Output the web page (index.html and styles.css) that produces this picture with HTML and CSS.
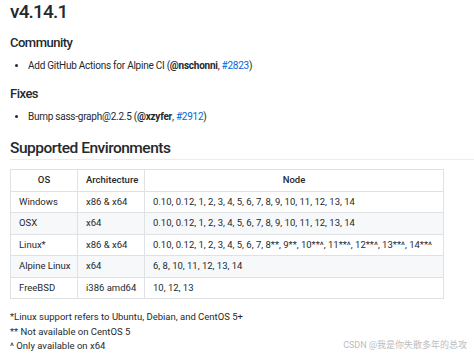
FILE: index.html
```html
<!DOCTYPE html>
<html lang="en">
<head>
    <meta charset="UTF-8">
    <title>v4.14.1</title>
    <link rel="stylesheet" href="styles.css">
</head>
<body>
    <div class="release">
        <h1>v4.14.1</h1>

        <h3>Community</h3>
        <ul>
            <li>Add GitHub Actions for Alpine CI (<strong>@nschonni</strong>, <a href="#">#2823</a>)</li>
        </ul>

        <h3>Fixes</h3>
        <ul>
            <li>Bump sass-graph@2.2.5 (<strong>@xzyfer</strong>, <a href="#">#2912</a>)</li>
        </ul>

        <h2>Supported Environments</h2>
        <table class="env-table">
            <colgroup>
                <col class="col-os">
                <col class="col-arch">
                <col>
            </colgroup>
            <thead>
                <tr>
                    <th>OS</th>
                    <th>Architecture</th>
                    <th>Node</th>
                </tr>
            </thead>
            <tbody>
                <tr><td>Windows</td><td>x86 &amp; x64</td><td>0.10, 0.12, 1, 2, 3, 4, 5, 6, 7, 8, 9, 10, 11, 12, 13, 14</td></tr>
                <tr><td>OSX</td><td>x64</td><td>0.10, 0.12, 1, 2, 3, 4, 5, 6, 7, 8, 9, 10, 11, 12, 13, 14</td></tr>
                <tr><td>Linux*</td><td>x86 &amp; x64</td><td>0.10, 0.12, 1, 2, 3, 4, 5, 6, 7, 8**, 9**, 10**^, 11**^, 12**^, 13**^, 14**^</td></tr>
                <tr><td>Alpine Linux</td><td>x64</td><td>6, 8, 10, 11, 12, 13, 14</td></tr>
                <tr><td>FreeBSD</td><td>i386 amd64</td><td>10, 12, 13</td></tr>
            </tbody>
        </table>

        <p class="notes">
            *Linux support refers to Ubuntu, Debian, and CentOS 5+<br>
            ** Not available on CentOS 5<br>
            ^ Only available on x64
        </p>
    </div>

    <div class="watermark">CSDN @我是你失散多年的总攻</div>
</body>
</html>
```

FILE: styles.css
```css
body {
    margin: 0;
    background: #fff;
    font-family: 'Roboto', 'Noto Sans CJK SC', sans-serif;
    font-size: 10px;
    color: #24292e;
    position: relative;
    height: 358px;
    overflow: hidden;
}

.release {
    padding-left: 10px;
}

h1 {
    font-size: 19px;
    font-weight: 500;
    letter-spacing: -0.8px;
    margin: 0;
    line-height: 24px;
}

h3 {
    font-size: 13px;
    font-weight: 500;
    letter-spacing: -0.5px;
    margin: 9px 0 0;
    line-height: 20px;
}

ul {
    margin: 4px 0 0;
    padding-left: 18px;
    line-height: 18px;
    font-size: 10px;
    letter-spacing: -0.25px;
}

strong {
    font-weight: 700;
}

a {
    color: #0366d6;
    text-decoration: none;
}

h2 {
    font-size: 15.5px;
    font-weight: 500;
    letter-spacing: -0.5px;
    margin: 12px 0 0;
    line-height: 20px;
    padding-bottom: 1px;
    border-bottom: 1px solid #eaecef;
}

.env-table {
    border-collapse: collapse;
    table-layout: fixed;
    width: 434px;
    margin-top: 9px;
    font-size: 9.5px;
}

.col-os,
.col-arch {
    width: 67px;
}

.env-table th,
.env-table td {
    border: 1px solid #dfe2e5;
    padding: 2px 8px;
    line-height: 16.5px;
    text-align: left;
    white-space: nowrap;
}

.env-table th {
    font-weight: 500;
    text-align: center;
}

.env-table tbody tr:nth-child(even) {
    background: #f6f8fa;
}

.notes {
    margin: 11px 0 0;
    line-height: 14.5px;
    font-size: 9.5px;
}

.watermark {
    position: absolute;
    right: 7px;
    bottom: 7px;
    font-size: 9px;
    line-height: 12px;
    color: #bdbdbd;
}
```
